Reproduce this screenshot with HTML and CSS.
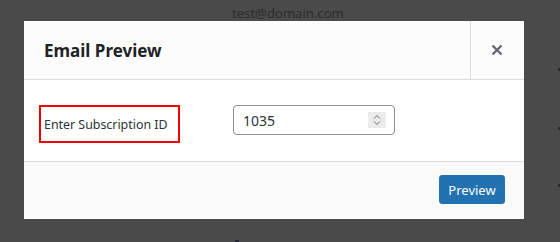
FILE: index.html
```html
<!DOCTYPE html>
<html>
<head>
<meta charset="utf-8">
<link rel="stylesheet" href="styles.css">
</head>
<body>
<div class="page">
  <div class="bg-email">test@domain.com</div>
  <span class="peek peek-1"></span>
  <span class="peek peek-2"></span>
  <span class="peek peek-3"></span>
  <span class="peek peek-4"></span>
</div>
<div class="modal">
  <div class="modal-header">
    <h1 class="modal-title">Email Preview</h1>
    <button class="modal-close" aria-label="Close">
      <svg width="12" height="12" viewBox="0 0 12 12"><path d="M1.5 1.5L10.5 10.5M10.5 1.5L1.5 10.5" stroke="#646970" stroke-width="2.4" stroke-linecap="butt"/></svg>
    </button>
  </div>
  <div class="modal-body">
    <label class="field-label">Enter Subscription ID</label>
    <div class="number-input">
      <span class="number-value">1035</span>
      <span class="spinner">
        <svg width="8" height="12" viewBox="0 0 8 12"><path d="M1 4.5L4 1.5L7 4.5M1 7.5L4 10.5L7 7.5" fill="none" stroke="#6b6b6b" stroke-width="1"/></svg>
      </span>
    </div>
  </div>
  <div class="modal-footer">
    <button class="btn-primary">Preview</button>
  </div>
</div>
</body>
</html>
```
FILE: styles.css
```css
html, body {
  margin: 0;
  padding: 0;
}
body {
  background: #4a4a4a;
  font-family: "Noto Sans", "Open Sans", sans-serif;
  width: 560px;
  height: 242px;
  overflow: hidden;
  position: relative;
}
.page {
  height: 242px;
  position: relative;
}
.bg-email {
  padding-top: 4px;
  padding-left: 232px;
  font-size: 13.2px;
  line-height: 18px;
  color: #2b2b2b;
  font-family: "Open Sans", "Noto Sans", sans-serif;
}
.peek {
  position: absolute;
  width: 3px;
  height: 3px;
  background: #1d2a35;
  border-radius: 1px;
}
.peek-1 { left: 558px; top: 68px; }
.peek-2 { left: 558px; top: 127px; }
.peek-3 { left: 558px; top: 184px; }
.peek-4 { left: 235px; top: 240px; width: 4px; }

.modal {
  position: absolute;
  left: 24px;
  top: 21px;
  width: 500px;
  height: 198px;
  background: #fff;
  display: flex;
  flex-direction: column;
}
.modal-header {
  height: 58px;
  border-bottom: 1px solid #dcdcde;
  background: #fcfcfc;
  display: flex;
  align-items: stretch;
}
.modal-title {
  flex: 1;
  margin: 0;
  padding-left: 20px;
  font-size: 17px;
  font-weight: 700;
  color: #1d2327;
  display: flex;
  align-items: center;
  padding-top: 1px;
}
.modal-close {
  width: 54px;
  border: 0;
  border-left: 1px solid #dcdcde;
  background: transparent;
  padding: 0;
  display: flex;
  align-items: center;
  justify-content: center;
  padding-right: 1px;
}
.modal-body {
  height: 82px;
  box-sizing: border-box;
  padding: 25px 0 0 15px;
  display: flex;
  align-items: flex-start;
  gap: 53px;
  border-bottom: 1px solid #dcdcde;
}
.field-label {
  width: 141px;
  height: 38px;
  box-sizing: border-box;
  border: 2px solid #f00000;
  display: flex;
  align-items: center;
  padding-left: 3px;
  padding-top: 1px;
  font-size: 12.4px;
  color: #2c3338;
}
.number-input {
  width: 162px;
  height: 30px;
  box-sizing: border-box;
  border: 1px solid #8c8f94;
  border-radius: 4px;
  display: flex;
  align-items: center;
  padding-left: 9px;
  padding-right: 8px;
}
.number-value {
  flex: 1;
  font-size: 14px;
  color: #2c3338;
}
.spinner {
  width: 18px;
  height: 16px;
  background: #ebebeb;
  display: flex;
  align-items: center;
  justify-content: center;
}
.modal-footer {
  flex: 1;
  background: #fafafa;
  display: flex;
  justify-content: flex-end;
  align-items: flex-start;
  padding: 13px 19px 0 0;
}
.btn-primary {
  width: 66px;
  height: 29px;
  background: #2271b1;
  border: 1px solid #2271b1;
  border-radius: 3px;
  color: #fff;
  font-family: "Noto Sans", "Open Sans", sans-serif;
  font-size: 13px;
  padding: 0;
}
```
